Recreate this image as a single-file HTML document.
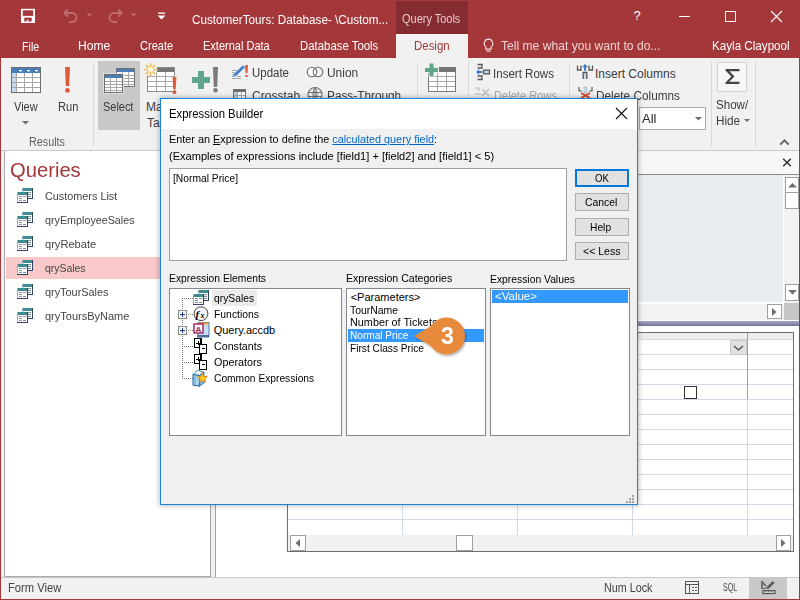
<!DOCTYPE html>
<html><head><meta charset="utf-8">
<style>
*{margin:0;padding:0;box-sizing:border-box}
html,body{width:800px;height:600px;overflow:hidden;background:#fff}
body{font-family:"Liberation Sans",sans-serif;position:relative}
.a{position:absolute;display:block}
.t{position:absolute;white-space:nowrap}
</style></head><body>
<div class="a" style="left:0px;top:0px;width:800px;height:58px;background:#A4373A;"></div>
<div class="a" style="left:396px;top:1px;width:72px;height:33px;background:#842C30;"></div>
<div class="a" style="left:396px;top:34px;width:72px;height:24px;background:#F1F1F1;"></div>
<svg class="a" style="left:20px;top:7px;" width="17" height="17" viewBox="0 0 17 17"><rect x="1" y="1.8" width="14" height="14.2" fill="#fff"/><rect x="2.8" y="3.3" width="10.4" height="5.6" fill="#A4373A"/><rect x="4.3" y="10.6" width="7.4" height="3.9" fill="#A4373A"/><rect x="6.6" y="12.8" width="1.8" height="1.8" fill="#fff"/></svg>
<svg class="a" style="left:62px;top:8px;" width="18" height="15" viewBox="0 0 18 15"><path d="M2 5 L6 1.5 M2 5 L6 8.5 M2 5 H10 A4.5 4.5 0 0 1 10 14 H7" fill="none" stroke="#C06B6D" stroke-width="1.8"/></svg>
<svg class="a" style="left:86px;top:13px;" width="8" height="4" viewBox="0 0 8 4"><path d="M0.5 0.5h6l-3 3z" fill="#C06B6D"/></svg>
<svg class="a" style="left:106px;top:8px;" width="18" height="15" viewBox="0 0 18 15"><path d="M16 5 L12 1.5 M16 5 L12 8.5 M16 5 H8 A4.5 4.5 0 0 0 8 14 H11" fill="none" stroke="#C06B6D" stroke-width="1.8"/></svg>
<svg class="a" style="left:130px;top:13px;" width="8" height="4" viewBox="0 0 8 4"><path d="M0.5 0.5h6l-3 3z" fill="#C06B6D"/></svg>
<svg class="a" style="left:157px;top:12px;" width="9" height="8" viewBox="0 0 9 8"><rect x="1" y="0.5" width="7" height="1.3" fill="#fff"/><path d="M0.5 3.5h8l-4 4z" fill="#fff"/></svg>
<div class="t" style="left:192.00px;top:14px;font-size:12px;line-height:12px;color:#fff;font-weight:normal;font-family:'Liberation Sans',sans-serif;transform:scaleX(0.9748);transform-origin:0 0;">CustomerTours: Database- \Custom...</div>
<div class="t" style="left:402.00px;top:13px;font-size:12px;line-height:12px;color:#E9C9CA;font-weight:normal;font-family:'Liberation Sans',sans-serif;transform:scaleX(0.9137);transform-origin:0 0;">Query Tools</div>
<svg class="a" style="left:632px;top:9px;" width="10" height="13" viewBox="0 0 10 13"><text x="5" y="11" font-family="Liberation Sans" font-size="13" fill="#fff" text-anchor="middle">?</text></svg>
<div class="a" style="left:679px;top:16px;width:11px;height:1px;background:#fff;"></div>
<svg class="a" style="left:724px;top:10px;" width="12" height="12" viewBox="0 0 12 12"><rect x="1.5" y="1.5" width="10" height="10" fill="none" stroke="#fff" stroke-width="1"/></svg>
<svg class="a" style="left:770px;top:10px;" width="13" height="13" viewBox="0 0 13 13"><path d="M1 1L12 12M12 1L1 12" stroke="#fff" stroke-width="1.1"/></svg>
<div class="t" style="left:21.50px;top:41px;font-size:12px;line-height:12px;color:#fff;font-weight:normal;font-family:'Liberation Sans',sans-serif;transform:scaleX(0.8900);transform-origin:0 0;">File</div>
<div class="t" style="left:77.50px;top:40px;font-size:12px;line-height:12px;color:#fff;font-weight:normal;font-family:'Liberation Sans',sans-serif;transform:scaleX(1.0051);transform-origin:0 0;">Home</div>
<div class="t" style="left:139.50px;top:40px;font-size:12px;line-height:12px;color:#fff;font-weight:normal;font-family:'Liberation Sans',sans-serif;transform:scaleX(0.9218);transform-origin:0 0;">Create</div>
<div class="t" style="left:202.50px;top:40px;font-size:12px;line-height:12px;color:#fff;font-weight:normal;font-family:'Liberation Sans',sans-serif;transform:scaleX(0.9174);transform-origin:0 0;">External Data</div>
<div class="t" style="left:299.50px;top:40px;font-size:12px;line-height:12px;color:#fff;font-weight:normal;font-family:'Liberation Sans',sans-serif;transform:scaleX(0.9490);transform-origin:0 0;">Database Tools</div>
<div class="t" style="left:413.50px;top:40px;font-size:12px;line-height:12px;color:#A4373A;font-weight:normal;font-family:'Liberation Sans',sans-serif;transform:scaleX(0.9542);transform-origin:0 0;">Design</div>
<svg class="a" style="left:482px;top:38px;" width="13" height="15" viewBox="0 0 13 15"><path d="M6.5 1.2a4.3 4.3 0 0 0-2.6 7.7v2.2h5.2V8.9a4.3 4.3 0 0 0-2.6-7.7z" fill="none" stroke="#F2D7D7" stroke-width="1.2"/><path d="M4.3 13.2h4.4" stroke="#F2D7D7" stroke-width="1.2"/></svg>
<div class="t" style="left:501.00px;top:40px;font-size:12.5px;line-height:12.5px;color:#F0D4D4;font-weight:normal;font-family:'Liberation Sans',sans-serif;transform:scaleX(0.9684);transform-origin:0 0;">Tell me what you want to do...</div>
<div class="t" style="left:711.50px;top:40px;font-size:12px;line-height:12px;color:#fff;font-weight:normal;font-family:'Liberation Sans',sans-serif;transform:scaleX(0.9700);transform-origin:0 0;">Kayla Claypool</div>
<div class="a" style="left:1px;top:58px;width:798px;height:92px;background:#F1F1F1;"></div>
<div class="a" style="left:1px;top:150px;width:798px;height:1px;background:#C9C9C9;"></div>
<div class="a" style="left:93px;top:62px;width:1px;height:84px;background:#DADADA;"></div>
<div class="a" style="left:417px;top:62px;width:1px;height:84px;background:#DADADA;"></div>
<div class="a" style="left:468px;top:62px;width:1px;height:84px;background:#DADADA;"></div>
<div class="a" style="left:569px;top:62px;width:1px;height:84px;background:#DADADA;"></div>
<div class="a" style="left:711px;top:62px;width:1px;height:84px;background:#DADADA;"></div>
<div class="a" style="left:755px;top:62px;width:1px;height:84px;background:#DADADA;"></div>
<svg class="a" style="left:11px;top:67px;shape-rendering:crispEdges" width="30" height="26" viewBox="0 0 30 26"><rect x="0" y="0" width="30" height="26" fill="#6E6E6E"/><rect x="1" y="6" width="28" height="19" fill="#A8A8A8"/><rect x="1" y="1" width="28" height="5" fill="#4A7EBB"/><rect x="1" y="6" width="4" height="4" fill="#C5D9EF"/><rect x="6" y="6" width="7" height="4" fill="#fff"/><rect x="14" y="6" width="7" height="4" fill="#fff"/><rect x="22" y="6" width="7" height="4" fill="#fff"/><rect x="1" y="11" width="4" height="4" fill="#C5D9EF"/><rect x="6" y="11" width="7" height="4" fill="#fff"/><rect x="14" y="11" width="7" height="4" fill="#fff"/><rect x="22" y="11" width="7" height="4" fill="#fff"/><rect x="1" y="16" width="4" height="4" fill="#C5D9EF"/><rect x="6" y="16" width="7" height="4" fill="#fff"/><rect x="14" y="16" width="7" height="4" fill="#fff"/><rect x="22" y="16" width="7" height="4" fill="#fff"/><rect x="1" y="21" width="4" height="4" fill="#C5D9EF"/><rect x="6" y="21" width="7" height="4" fill="#fff"/><rect x="14" y="21" width="7" height="4" fill="#fff"/><rect x="22" y="21" width="7" height="4" fill="#fff"/><path d="M8 2.5h4l-2 2.2z M16 2.5h4l-2 2.2z M24 2.5h4l-2 2.2z" fill="#fff" transform="translate(-0.5,0)"/></svg>
<div class="t" style="left:13.50px;top:101px;font-size:12px;line-height:12px;color:#3B3B3B;font-weight:normal;font-family:'Liberation Sans',sans-serif;transform:scaleX(0.9186);transform-origin:0 0;">View</div>
<svg class="a" style="left:22px;top:121px;" width="7" height="4" viewBox="0 0 7 4"><path d="M0 0h7l-3.5 3.5z" fill="#6E6E6E"/></svg>
<svg class="a" style="left:64px;top:66px;" width="7" height="28" viewBox="0 0 7 28"><path d="M1 1h5l-0.8 19h-3.4z" fill="#DE5B3C"/><circle cx="3.5" cy="24.4" r="2.4" fill="#DE5B3C"/></svg>
<div class="t" style="left:57.70px;top:101px;font-size:12px;line-height:12px;color:#3B3B3B;font-weight:normal;font-family:'Liberation Sans',sans-serif;transform:scaleX(0.9278);transform-origin:0 0;">Run</div>
<div class="t" style="left:28.50px;top:136px;font-size:12px;line-height:12px;color:#5E5E5E;font-weight:normal;font-family:'Liberation Sans',sans-serif;transform:scaleX(0.8972);transform-origin:0 0;">Results</div>
<div class="a" style="left:98px;top:61px;width:42px;height:69px;background:#C8C8C8;"></div>
<svg class="a" style="left:116px;top:68px;shape-rendering:crispEdges" width="19" height="19" viewBox="0 0 19 19"><rect x="0" y="0" width="19" height="19" fill="#6E6E6E"/><rect x="1" y="4" width="17" height="14" fill="#A8A8A8"/><rect x="1" y="1" width="17" height="3" fill="#4A7EBB"/><rect x="1" y="4" width="5" height="3" fill="#fff"/><rect x="7" y="4" width="5" height="3" fill="#fff"/><rect x="13" y="4" width="5" height="3" fill="#fff"/><rect x="1" y="8" width="5" height="2" fill="#fff"/><rect x="7" y="8" width="5" height="2" fill="#fff"/><rect x="13" y="8" width="5" height="2" fill="#fff"/><rect x="1" y="11" width="5" height="2" fill="#fff"/><rect x="7" y="11" width="5" height="2" fill="#fff"/><rect x="13" y="11" width="5" height="2" fill="#fff"/><rect x="1" y="14" width="5" height="2" fill="#fff"/><rect x="7" y="14" width="5" height="2" fill="#fff"/><rect x="13" y="14" width="5" height="2" fill="#fff"/><rect x="1" y="17" width="5" height="1" fill="#fff"/><rect x="7" y="17" width="5" height="1" fill="#fff"/><rect x="13" y="17" width="5" height="1" fill="#fff"/></svg>
<svg class="a" style="left:103px;top:73px;shape-rendering:crispEdges" width="21" height="21" viewBox="0 0 21 21"><rect x="0" y="0" width="21" height="21" fill="#E0E0E0"/><g transform="translate(1,1)"><rect x="0" y="0" width="19" height="19" fill="#6E6E6E"/><rect x="1" y="4" width="17" height="14" fill="#A8A8A8"/><rect x="1" y="1" width="17" height="3" fill="#4A7EBB"/><rect x="1" y="4" width="5" height="3" fill="#fff"/><rect x="7" y="4" width="5" height="3" fill="#fff"/><rect x="13" y="4" width="5" height="3" fill="#fff"/><rect x="1" y="8" width="5" height="2" fill="#fff"/><rect x="7" y="8" width="5" height="2" fill="#fff"/><rect x="13" y="8" width="5" height="2" fill="#fff"/><rect x="1" y="11" width="5" height="2" fill="#fff"/><rect x="7" y="11" width="5" height="2" fill="#fff"/><rect x="13" y="11" width="5" height="2" fill="#fff"/><rect x="1" y="14" width="5" height="2" fill="#fff"/><rect x="7" y="14" width="5" height="2" fill="#fff"/><rect x="13" y="14" width="5" height="2" fill="#fff"/><rect x="1" y="17" width="5" height="1" fill="#fff"/><rect x="7" y="17" width="5" height="1" fill="#fff"/><rect x="13" y="17" width="5" height="1" fill="#fff"/></g></svg>
<div class="t" style="left:103.00px;top:101px;font-size:12px;line-height:12px;color:#3B3B3B;font-weight:normal;font-family:'Liberation Sans',sans-serif;transform:scaleX(0.9113);transform-origin:0 0;">Select</div>
<svg class="a" style="left:147px;top:67px;shape-rendering:crispEdges" width="28" height="25" viewBox="0 0 28 25"><rect x="0" y="0" width="28" height="25" fill="#8A8A8A"/><rect x="1" y="5" width="26" height="19" fill="#A8A8A8"/><rect x="1" y="1" width="26" height="4" fill="#767676"/><rect x="1" y="5" width="8" height="4" fill="#fff"/><rect x="10" y="5" width="8" height="4" fill="#fff"/><rect x="19" y="5" width="8" height="4" fill="#fff"/><rect x="1" y="10" width="8" height="4" fill="#fff"/><rect x="10" y="10" width="8" height="4" fill="#fff"/><rect x="19" y="10" width="8" height="4" fill="#fff"/><rect x="1" y="15" width="8" height="4" fill="#fff"/><rect x="10" y="15" width="8" height="4" fill="#fff"/><rect x="19" y="15" width="8" height="4" fill="#fff"/><rect x="1" y="20" width="8" height="4" fill="#fff"/><rect x="10" y="20" width="8" height="4" fill="#fff"/><rect x="19" y="20" width="8" height="4" fill="#fff"/></svg>
<svg class="a" style="left:143px;top:62px;" width="15" height="15" viewBox="0 0 15 15"><circle cx="7.5" cy="7.5" r="6.8" fill="#F1F1F1"/><g stroke="#F0C060" stroke-width="1.7" stroke-linecap="round"><path d="M7.5 1.5v12M1.5 7.5h12M3.3 3.3l8.4 8.4M11.7 3.3l-8.4 8.4"/></g><circle cx="7.5" cy="7.5" r="2.6" fill="#FFF6DC"/></svg>
<svg class="a" style="left:171px;top:76px;" width="7" height="20" viewBox="0 0 7 20"><path d="M1.6 1h3.8l-0.6 12h-2.6z" fill="#DE5B3C"/><circle cx="3.5" cy="16.2" r="1.9" fill="#DE5B3C"/></svg>
<div class="t" style="left:146.00px;top:101px;font-size:12px;line-height:12px;color:#3B3B3B;font-weight:normal;font-family:'Liberation Sans',sans-serif;">Ma</div>
<div class="t" style="left:147.00px;top:117px;font-size:12px;line-height:12px;color:#3B3B3B;font-weight:normal;font-family:'Liberation Sans',sans-serif;">Ta</div>
<svg class="a" style="left:192px;top:71px;" width="18" height="18" viewBox="0 0 18 18"><path d="M6 0h6v6h6v6h-6v6h-6v-6h-6v-6h6z" fill="#5FA58A"/></svg>
<svg class="a" style="left:212px;top:66px;" width="7" height="28" viewBox="0 0 7 28"><path d="M1 1h5l-0.8 20h-3.4z" fill="#7A7A7A"/><circle cx="3.5" cy="24.3" r="2.3" fill="#7A7A7A"/></svg>
<svg class="a" style="left:230px;top:64px;" width="20" height="16" viewBox="0 0 20 16"><g stroke="#A8A8A8" stroke-width="1"><path d="M2 6.5h5M2 8.5h3M2 10.5h2M2 12.5h1.5M7 12.5h4M2 14.5h9"/></g><path d="M5.6 10.4L12.6 3.4" stroke="#3F7CC0" stroke-width="2.8"/><path d="M3 13l1.4-3.8 2.4 2.4z" fill="#3F7CC0"/><path d="M11.6 2.4l1.2-1.2 2.4 2.4-1.2 1.2z" fill="#3F7CC0"/><path d="M15.1 1h2.9l-0.5 8.3h-1.9z" fill="#DE5B3C"/><rect x="15.3" y="11" width="2.4" height="2" fill="#DE5B3C"/></svg>
<div class="t" style="left:251.50px;top:67px;font-size:12px;line-height:12px;color:#3B3B3B;font-weight:normal;font-family:'Liberation Sans',sans-serif;transform:scaleX(0.9546);transform-origin:0 0;">Update</div>
<svg class="a" style="left:306px;top:66px;" width="18" height="12" viewBox="0 0 18 12"><circle cx="6" cy="6" r="4.8" fill="#fff" stroke="#6E6E6E" stroke-width="1.1"/><circle cx="12" cy="6" r="4.8" fill="none" stroke="#6E6E6E" stroke-width="1.1"/></svg>
<div class="t" style="left:326.50px;top:67px;font-size:12px;line-height:12px;color:#3B3B3B;font-weight:normal;font-family:'Liberation Sans',sans-serif;transform:scaleX(0.9941);transform-origin:0 0;">Union</div>
<svg class="a" style="left:233px;top:89px;shape-rendering:crispEdges" width="13" height="9" viewBox="0 0 13 9"><rect x="0" y="0" width="13" height="12" fill="#6E6E6E"/><rect x="1" y="3" width="11" height="8" fill="#A8A8A8"/><rect x="1" y="1" width="11" height="2" fill="#6E6E6E"/><rect x="1" y="3" width="3" height="3" fill="#BCD0E8"/><rect x="5" y="3" width="3" height="3" fill="#fff"/><rect x="9" y="3" width="3" height="3" fill="#fff"/><rect x="1" y="7" width="3" height="2" fill="#BCD0E8"/><rect x="5" y="7" width="3" height="2" fill="#fff"/><rect x="9" y="7" width="3" height="2" fill="#fff"/><rect x="1" y="10" width="3" height="1" fill="#BCD0E8"/><rect x="5" y="10" width="3" height="1" fill="#fff"/><rect x="9" y="10" width="3" height="1" fill="#fff"/></svg>
<div class="t" style="left:251.50px;top:90px;font-size:12px;line-height:12px;color:#3B3B3B;font-weight:normal;font-family:'Liberation Sans',sans-serif;transform:scaleX(1.0032);transform-origin:0 0;">Crosstab</div>
<svg class="a" style="left:307px;top:86px;" width="16" height="12" viewBox="0 0 16 12"><circle cx="8" cy="8.5" r="7" fill="none" stroke="#6E6E6E" stroke-width="1.1"/><path d="M1.5 6.5h13M1.5 10.5h13M8 1.5v14M8 1.5c-2.6 3-2.6 11 0 14M8 1.5c2.6 3 2.6 11 0 14" fill="none" stroke="#6E6E6E" stroke-width="1"/></svg>
<div class="t" style="left:326.50px;top:90px;font-size:12px;line-height:12px;color:#3B3B3B;font-weight:normal;font-family:'Liberation Sans',sans-serif;transform:scaleX(0.9840);transform-origin:0 0;">Pass-Through</div>
<svg class="a" style="left:428px;top:67px;shape-rendering:crispEdges" width="28" height="25" viewBox="0 0 28 25"><rect x="0" y="0" width="28" height="25" fill="#767676"/><rect x="1" y="5" width="26" height="19" fill="#A8A8A8"/><rect x="1" y="1" width="26" height="4" fill="#767676"/><rect x="1" y="5" width="8" height="4" fill="#fff"/><rect x="10" y="5" width="8" height="4" fill="#fff"/><rect x="19" y="5" width="8" height="4" fill="#fff"/><rect x="1" y="10" width="8" height="4" fill="#fff"/><rect x="10" y="10" width="8" height="4" fill="#fff"/><rect x="19" y="10" width="8" height="4" fill="#fff"/><rect x="1" y="15" width="8" height="4" fill="#fff"/><rect x="10" y="15" width="8" height="4" fill="#fff"/><rect x="19" y="15" width="8" height="4" fill="#fff"/><rect x="1" y="20" width="8" height="4" fill="#fff"/><rect x="10" y="20" width="8" height="4" fill="#fff"/><rect x="19" y="20" width="8" height="4" fill="#fff"/></svg>
<svg class="a" style="left:425px;top:63px;" width="14" height="14" viewBox="0 0 14 14"><rect x="0" y="0" width="14" height="14" fill="none"/><path d="M4 0h5v4.5h4.5v5h-4.5v4.5h-5v-4.5h-4.5v-5h4.5z" fill="#5FA58A" stroke="#F1F1F1" stroke-width="1"/></svg>
<svg class="a" style="left:475px;top:63px;" width="16" height="18" viewBox="0 0 16 18"><g fill="none" stroke="#555" stroke-width="1.3"><path d="M2.5 1.5h4.5v3.5h-4.5M2.5 13h4.5v3.5h-4.5"/><rect x="8.5" y="7.2" width="6" height="3.6" fill="#C5DCF2"/></g><path d="M1 9l3.2-3v2h3v2h-3v2z" fill="#3F7CC0"/></svg>
<div class="t" style="left:493.04px;top:68px;font-size:12px;line-height:12px;color:#3B3B3B;font-weight:normal;font-family:'Liberation Sans',sans-serif;transform:scaleX(0.9623);transform-origin:0 0;">Insert Rows</div>
<svg class="a" style="left:474px;top:86px;" width="17" height="12" viewBox="0 0 17 12"><g stroke="#B8B8B8" stroke-width="1.2" fill="none"><path d="M1 2h4v3M1 8h6M8 3l7 7M15 3l-7 7"/></g></svg>
<div class="t" style="left:494.00px;top:90px;font-size:12px;line-height:12px;color:#A8A8A8;font-weight:normal;font-family:'Liberation Sans',sans-serif;transform:scaleX(0.9261);transform-origin:0 0;">Delete Rows</div>
<svg class="a" style="left:576px;top:63px;" width="18" height="17" viewBox="0 0 18 17"><g fill="none" stroke="#555" stroke-width="1.3"><path d="M1.5 2.5v4.5h3.5v-4.5M13 2.5v4.5h3.5v-4.5"/><path d="M7.2 16v-6.5h3.6v6.5" fill="#C5DCF2"/></g><path d="M9 1l3 3.2h-2v3.5h-2v-3.5h-2z" fill="#3F7CC0"/></svg>
<div class="t" style="left:595.00px;top:68px;font-size:12px;line-height:12px;color:#3B3B3B;font-weight:normal;font-family:'Liberation Sans',sans-serif;">Insert Columns</div>
<svg class="a" style="left:578px;top:86px;" width="15" height="12" viewBox="0 0 15 12"><g fill="none" stroke="#555" stroke-width="1.2"><path d="M1 1v4h3M14 1v4h-3"/></g><rect x="6" y="1" width="3" height="6" fill="#C5DCF2" stroke="#A8A8A8" stroke-width="0.6"/><path d="M3 7l9 5M12 7l-9 5" stroke="#D9462F" stroke-width="2"/></svg>
<div class="t" style="left:596.00px;top:90px;font-size:12px;line-height:12px;color:#3B3B3B;font-weight:normal;font-family:'Liberation Sans',sans-serif;transform:scaleX(0.9839);transform-origin:0 0;">Delete Columns</div>
<div class="a" style="left:639px;top:107px;width:67px;height:23px;background:#fff;border:1px solid #ABABAB"></div>
<div class="t" style="left:642.20px;top:113px;font-size:12px;line-height:12px;color:#262626;font-weight:normal;font-family:'Liberation Sans',sans-serif;transform:scaleX(1.0892);transform-origin:0 0;">All</div>
<svg class="a" style="left:695px;top:117px;" width="7" height="4" viewBox="0 0 7 4"><path d="M0 0h7l-3.5 3.5z" fill="#6E6E6E"/></svg>
<div class="a" style="left:717px;top:62px;width:30px;height:30px;background:#F7F7F7;border:1px solid #D2D2D2"></div>
<svg class="a" style="left:724px;top:68px;" width="17" height="17" viewBox="0 0 17 17"><path d="M15.5 3.2V1H1.5v1.6l5.8 5.9-5.9 6.2V16h14.1v-2.3H5.2l5.3-5.3-5-5.2z" fill="#444"/></svg>
<div class="t" style="left:716.20px;top:99px;font-size:12px;line-height:12px;color:#3B3B3B;font-weight:normal;font-family:'Liberation Sans',sans-serif;transform:scaleX(0.9642);transform-origin:0 0;">Show/</div>
<div class="t" style="left:716.20px;top:115px;font-size:12px;line-height:12px;color:#3B3B3B;font-weight:normal;font-family:'Liberation Sans',sans-serif;transform:scaleX(0.9758);transform-origin:0 0;">Hide</div>
<svg class="a" style="left:744px;top:119px;" width="6" height="3" viewBox="0 0 6 3"><path d="M0 0h6l-3 3z" fill="#6E6E6E"/></svg>
<svg class="a" style="left:779px;top:137px;" width="11" height="9" viewBox="0 0 11 9"><path d="M1.2 7.6l4.3-4.3 4.3 4.3" fill="none" stroke="#666" stroke-width="2"/></svg>
<div class="a" style="left:1px;top:151px;width:215px;height:426px;background:#F1F1F1;"></div>
<div class="a" style="left:4px;top:151px;width:207px;height:426px;background:#fff;border:1px solid #ABABAB;border-top:none"></div>
<div class="a" style="left:210px;top:151px;width:6px;height:426px;background:#F1F1F1;border-left:1px solid #A0A0A0;border-right:1px solid #A0A0A0"></div>
<div class="t" style="left:10.00px;top:160px;font-size:20px;line-height:20px;color:#A4373A;font-weight:normal;font-family:'Liberation Sans',sans-serif;transform:scaleX(1.0096);transform-origin:0 0;">Queries</div>
<div class="a" style="left:6px;top:257px;width:204px;height:22px;background:#F9C8C8;"></div>
<svg class="a" style="left:17px;top:188px;shape-rendering:crispEdges" width="17" height="15" viewBox="0 0 17 15"><rect x="5" y="0" width="11" height="11" fill="#fff"/><rect x="5" y="0" width="11" height="3" fill="#3F8C8E"/><rect x="5" y="0" width="1" height="11" fill="#9AAFC0"/><rect x="15" y="0" width="1" height="11" fill="#2E4560"/><rect x="5" y="10" width="11" height="1" fill="#2E4560"/><rect x="11" y="4" width="3" height="1" fill="#7F93AE"/><rect x="11" y="6" width="3" height="1" fill="#7F93AE"/><rect x="11" y="8" width="3" height="1" fill="#7F93AE"/><rect x="0" y="4" width="11" height="11" fill="#fff"/><rect x="0" y="4" width="11" height="3" fill="#3F8C8E"/><rect x="0" y="4" width="1" height="11" fill="#9AAFC0"/><rect x="10" y="4" width="1" height="11" fill="#2E4560"/><rect x="0" y="14" width="11" height="1" fill="#2E4560"/><rect x="2" y="8" width="3" height="1" fill="#7F93AE"/><rect x="6" y="8" width="3" height="1" fill="#7F93AE"/><rect x="2" y="10" width="3" height="1" fill="#7F93AE"/><rect x="2" y="12" width="3" height="1" fill="#7F93AE"/><rect x="6" y="12" width="3" height="1" fill="#7F93AE"/></svg>
<div class="t" style="left:44.70px;top:191px;font-size:11.5px;line-height:11.5px;color:#444444;font-weight:normal;font-family:'Liberation Sans',sans-serif;transform:scaleX(0.9420);transform-origin:0 0;">Customers List</div>
<svg class="a" style="left:17px;top:212px;shape-rendering:crispEdges" width="17" height="15" viewBox="0 0 17 15"><rect x="5" y="0" width="11" height="11" fill="#fff"/><rect x="5" y="0" width="11" height="3" fill="#3F8C8E"/><rect x="5" y="0" width="1" height="11" fill="#9AAFC0"/><rect x="15" y="0" width="1" height="11" fill="#2E4560"/><rect x="5" y="10" width="11" height="1" fill="#2E4560"/><rect x="11" y="4" width="3" height="1" fill="#7F93AE"/><rect x="11" y="6" width="3" height="1" fill="#7F93AE"/><rect x="11" y="8" width="3" height="1" fill="#7F93AE"/><rect x="0" y="4" width="11" height="11" fill="#fff"/><rect x="0" y="4" width="11" height="3" fill="#3F8C8E"/><rect x="0" y="4" width="1" height="11" fill="#9AAFC0"/><rect x="10" y="4" width="1" height="11" fill="#2E4560"/><rect x="0" y="14" width="11" height="1" fill="#2E4560"/><rect x="2" y="8" width="3" height="1" fill="#7F93AE"/><rect x="6" y="8" width="3" height="1" fill="#7F93AE"/><rect x="2" y="10" width="3" height="1" fill="#7F93AE"/><rect x="2" y="12" width="3" height="1" fill="#7F93AE"/><rect x="6" y="12" width="3" height="1" fill="#7F93AE"/></svg>
<div class="t" style="left:44.70px;top:215px;font-size:11.5px;line-height:11.5px;color:#444444;font-weight:normal;font-family:'Liberation Sans',sans-serif;transform:scaleX(0.9342);transform-origin:0 0;">qryEmployeeSales</div>
<svg class="a" style="left:17px;top:236px;shape-rendering:crispEdges" width="17" height="15" viewBox="0 0 17 15"><rect x="5" y="0" width="11" height="11" fill="#fff"/><rect x="5" y="0" width="11" height="3" fill="#3F8C8E"/><rect x="5" y="0" width="1" height="11" fill="#9AAFC0"/><rect x="15" y="0" width="1" height="11" fill="#2E4560"/><rect x="5" y="10" width="11" height="1" fill="#2E4560"/><rect x="11" y="4" width="3" height="1" fill="#7F93AE"/><rect x="11" y="6" width="3" height="1" fill="#7F93AE"/><rect x="11" y="8" width="3" height="1" fill="#7F93AE"/><rect x="0" y="4" width="11" height="11" fill="#fff"/><rect x="0" y="4" width="11" height="3" fill="#3F8C8E"/><rect x="0" y="4" width="1" height="11" fill="#9AAFC0"/><rect x="10" y="4" width="1" height="11" fill="#2E4560"/><rect x="0" y="14" width="11" height="1" fill="#2E4560"/><rect x="2" y="8" width="3" height="1" fill="#7F93AE"/><rect x="6" y="8" width="3" height="1" fill="#7F93AE"/><rect x="2" y="10" width="3" height="1" fill="#7F93AE"/><rect x="2" y="12" width="3" height="1" fill="#7F93AE"/><rect x="6" y="12" width="3" height="1" fill="#7F93AE"/></svg>
<div class="t" style="left:44.70px;top:239px;font-size:11.5px;line-height:11.5px;color:#444444;font-weight:normal;font-family:'Liberation Sans',sans-serif;transform:scaleX(0.9646);transform-origin:0 0;">qryRebate</div>
<svg class="a" style="left:17px;top:260px;shape-rendering:crispEdges" width="17" height="15" viewBox="0 0 17 15"><rect x="5" y="0" width="11" height="11" fill="#fff"/><rect x="5" y="0" width="11" height="3" fill="#3F8C8E"/><rect x="5" y="0" width="1" height="11" fill="#9AAFC0"/><rect x="15" y="0" width="1" height="11" fill="#2E4560"/><rect x="5" y="10" width="11" height="1" fill="#2E4560"/><rect x="11" y="4" width="3" height="1" fill="#7F93AE"/><rect x="11" y="6" width="3" height="1" fill="#7F93AE"/><rect x="11" y="8" width="3" height="1" fill="#7F93AE"/><rect x="0" y="4" width="11" height="11" fill="#fff"/><rect x="0" y="4" width="11" height="3" fill="#3F8C8E"/><rect x="0" y="4" width="1" height="11" fill="#9AAFC0"/><rect x="10" y="4" width="1" height="11" fill="#2E4560"/><rect x="0" y="14" width="11" height="1" fill="#2E4560"/><rect x="2" y="8" width="3" height="1" fill="#7F93AE"/><rect x="6" y="8" width="3" height="1" fill="#7F93AE"/><rect x="2" y="10" width="3" height="1" fill="#7F93AE"/><rect x="2" y="12" width="3" height="1" fill="#7F93AE"/><rect x="6" y="12" width="3" height="1" fill="#7F93AE"/></svg>
<div class="t" style="left:44.70px;top:263px;font-size:11.5px;line-height:11.5px;color:#444444;font-weight:normal;font-family:'Liberation Sans',sans-serif;transform:scaleX(0.9068);transform-origin:0 0;">qrySales</div>
<svg class="a" style="left:17px;top:284px;shape-rendering:crispEdges" width="17" height="15" viewBox="0 0 17 15"><rect x="5" y="0" width="11" height="11" fill="#fff"/><rect x="5" y="0" width="11" height="3" fill="#3F8C8E"/><rect x="5" y="0" width="1" height="11" fill="#9AAFC0"/><rect x="15" y="0" width="1" height="11" fill="#2E4560"/><rect x="5" y="10" width="11" height="1" fill="#2E4560"/><rect x="11" y="4" width="3" height="1" fill="#7F93AE"/><rect x="11" y="6" width="3" height="1" fill="#7F93AE"/><rect x="11" y="8" width="3" height="1" fill="#7F93AE"/><rect x="0" y="4" width="11" height="11" fill="#fff"/><rect x="0" y="4" width="11" height="3" fill="#3F8C8E"/><rect x="0" y="4" width="1" height="11" fill="#9AAFC0"/><rect x="10" y="4" width="1" height="11" fill="#2E4560"/><rect x="0" y="14" width="11" height="1" fill="#2E4560"/><rect x="2" y="8" width="3" height="1" fill="#7F93AE"/><rect x="6" y="8" width="3" height="1" fill="#7F93AE"/><rect x="2" y="10" width="3" height="1" fill="#7F93AE"/><rect x="2" y="12" width="3" height="1" fill="#7F93AE"/><rect x="6" y="12" width="3" height="1" fill="#7F93AE"/></svg>
<div class="t" style="left:44.70px;top:287px;font-size:11.5px;line-height:11.5px;color:#444444;font-weight:normal;font-family:'Liberation Sans',sans-serif;transform:scaleX(0.9456);transform-origin:0 0;">qryTourSales</div>
<svg class="a" style="left:17px;top:308px;shape-rendering:crispEdges" width="17" height="15" viewBox="0 0 17 15"><rect x="5" y="0" width="11" height="11" fill="#fff"/><rect x="5" y="0" width="11" height="3" fill="#3F8C8E"/><rect x="5" y="0" width="1" height="11" fill="#9AAFC0"/><rect x="15" y="0" width="1" height="11" fill="#2E4560"/><rect x="5" y="10" width="11" height="1" fill="#2E4560"/><rect x="11" y="4" width="3" height="1" fill="#7F93AE"/><rect x="11" y="6" width="3" height="1" fill="#7F93AE"/><rect x="11" y="8" width="3" height="1" fill="#7F93AE"/><rect x="0" y="4" width="11" height="11" fill="#fff"/><rect x="0" y="4" width="11" height="3" fill="#3F8C8E"/><rect x="0" y="4" width="1" height="11" fill="#9AAFC0"/><rect x="10" y="4" width="1" height="11" fill="#2E4560"/><rect x="0" y="14" width="11" height="1" fill="#2E4560"/><rect x="2" y="8" width="3" height="1" fill="#7F93AE"/><rect x="6" y="8" width="3" height="1" fill="#7F93AE"/><rect x="2" y="10" width="3" height="1" fill="#7F93AE"/><rect x="2" y="12" width="3" height="1" fill="#7F93AE"/><rect x="6" y="12" width="3" height="1" fill="#7F93AE"/></svg>
<div class="t" style="left:44.70px;top:311px;font-size:11.5px;line-height:11.5px;color:#444444;font-weight:normal;font-family:'Liberation Sans',sans-serif;transform:scaleX(0.9568);transform-origin:0 0;">qryToursByName</div>
<div class="a" style="left:216px;top:151px;width:583px;height:24px;background:#F7F7F7;"></div>
<div class="a" style="left:216px;top:174px;width:583px;height:1px;background:#8C8C8C;"></div>
<svg class="a" style="left:782px;top:158px;" width="10" height="9" viewBox="0 0 10 9"><path d="M1.2 0.8L8.8 8.2M8.8 0.8L1.2 8.2" stroke="#333" stroke-width="1.5"/></svg>
<div class="a" style="left:216px;top:175px;width:567px;height:127px;background:#E9EDF0;"></div>
<div class="a" style="left:783px;top:175px;width:1px;height:128px;background:#fff;"></div>
<div class="a" style="left:784px;top:175px;width:15px;height:128px;background:#F2F2F2;"></div>
<div class="a" style="left:785px;top:177px;width:14px;height:16px;background:#fff;border:1px solid #A0A0A0"></div>
<svg class="a" style="left:788px;top:183px;" width="9" height="5" viewBox="0 0 9 5"><path d="M0 4.5h9l-4.5-4.5z" fill="#6E6E6E"/></svg>
<div class="a" style="left:785px;top:192px;width:14px;height:17px;background:#fff;border:1px solid #A0A0A0"></div>
<div class="a" style="left:785px;top:284px;width:14px;height:17px;background:#fff;border:1px solid #A0A0A0"></div>
<svg class="a" style="left:788px;top:290px;" width="9" height="5" viewBox="0 0 9 5"><path d="M0 0h9l-4.5 4.5z" fill="#6E6E6E"/></svg>
<div class="a" style="left:216px;top:302px;width:568px;height:18px;background:#F2F2F2;"></div>
<div class="a" style="left:216px;top:302px;width:568px;height:2px;background:#fff;"></div>
<div class="a" style="left:767px;top:304px;width:15px;height:15px;background:#fff;border:1px solid #A0A0A0"></div>
<svg class="a" style="left:772px;top:308px;" width="5" height="8" viewBox="0 0 5 8"><path d="M0 0v8l4.5-4z" fill="#6E6E6E"/></svg>
<div class="a" style="left:784px;top:303px;width:15px;height:17px;background:#C6C6C6;"></div>
<div class="a" style="left:216px;top:320px;width:583px;height:7px;background:#fff;"></div>
<div class="a" style="left:216px;top:321px;width:583px;height:5px;background:linear-gradient(#A8A8C4,#727296);"></div>
<div class="a" style="left:216px;top:326px;width:583px;height:251px;background:#fff;"></div>
<div class="a" style="left:287px;top:332px;width:507px;height:220px;background:#fff;border:1px solid #6E6E6E"></div>
<div class="a" style="left:288px;top:333px;width:505px;height:6px;background:#EDEDED;"></div>
<div class="a" style="left:288px;top:339px;width:505px;height:1px;background:#D2D9E8;"></div>
<div class="a" style="left:288px;top:354px;width:505px;height:1px;background:#D2D9E8;"></div>
<div class="a" style="left:288px;top:369px;width:505px;height:1px;background:#D2D9E8;"></div>
<div class="a" style="left:288px;top:384px;width:505px;height:1px;background:#D2D9E8;"></div>
<div class="a" style="left:288px;top:399px;width:505px;height:1px;background:#D2D9E8;"></div>
<div class="a" style="left:288px;top:414px;width:505px;height:1px;background:#D2D9E8;"></div>
<div class="a" style="left:288px;top:429px;width:505px;height:1px;background:#D2D9E8;"></div>
<div class="a" style="left:288px;top:444px;width:505px;height:1px;background:#D2D9E8;"></div>
<div class="a" style="left:288px;top:459px;width:505px;height:1px;background:#D2D9E8;"></div>
<div class="a" style="left:288px;top:474px;width:505px;height:1px;background:#D2D9E8;"></div>
<div class="a" style="left:288px;top:489px;width:505px;height:1px;background:#D2D9E8;"></div>
<div class="a" style="left:288px;top:504px;width:505px;height:1px;background:#D2D9E8;"></div>
<div class="a" style="left:288px;top:519px;width:505px;height:1px;background:#D2D9E8;"></div>
<div class="a" style="left:402px;top:333px;width:1px;height:202px;background:#D2D9E8;"></div>
<div class="a" style="left:517px;top:333px;width:1px;height:202px;background:#D2D9E8;"></div>
<div class="a" style="left:632px;top:333px;width:1px;height:202px;background:#D2D9E8;"></div>
<div class="a" style="left:747px;top:333px;width:1px;height:202px;background:#D2D9E8;"></div>
<div class="a" style="left:747px;top:333px;width:1px;height:66px;background:#A0A0A0;"></div>
<div class="a" style="left:730px;top:340px;width:17px;height:15px;background:#E1E1E1;border:1px solid #C8C8C8"></div>
<svg class="a" style="left:733px;top:345px;" width="11" height="6" viewBox="0 0 11 6"><path d="M1 1l4.5 4 4.5-4" fill="none" stroke="#444" stroke-width="1.2"/></svg>
<div class="a" style="left:684px;top:386px;width:13px;height:13px;background:#fff;border:1.3px solid #333"></div>
<div class="a" style="left:288px;top:535px;width:505px;height:16px;background:#F1F1F1;"></div>
<div class="a" style="left:290px;top:535px;width:16px;height:16px;background:#fff;border:1px solid #A0A0A0"></div>
<svg class="a" style="left:295px;top:539px;" width="5" height="8" viewBox="0 0 5 8"><path d="M5 0v8l-4.5-4z" fill="#6E6E6E"/></svg>
<div class="a" style="left:456px;top:535px;width:17px;height:16px;background:#fff;border:1px solid #A0A0A0"></div>
<div class="a" style="left:776px;top:535px;width:15px;height:16px;background:#fff;border:1px solid #A0A0A0"></div>
<svg class="a" style="left:781px;top:539px;" width="5" height="8" viewBox="0 0 5 8"><path d="M0 0v8l4.5-4z" fill="#6E6E6E"/></svg>
<div class="a" style="left:1px;top:577px;width:798px;height:22px;background:#F1F1F1;border-top:1px solid #C6C6C6"></div>
<div class="t" style="left:8.20px;top:582px;font-size:12px;line-height:12px;color:#444444;font-weight:normal;font-family:'Liberation Sans',sans-serif;transform:scaleX(0.9329);transform-origin:0 0;">Form View</div>
<div class="t" style="left:604.40px;top:582px;font-size:12px;line-height:12px;color:#444444;font-weight:normal;font-family:'Liberation Sans',sans-serif;transform:scaleX(0.8979);transform-origin:0 0;">Num Lock</div>
<svg class="a" style="left:685px;top:581px;shape-rendering:crispEdges" width="14" height="13" viewBox="0 0 14 13"><rect x="0.5" y="0.5" width="13" height="12" fill="none" stroke="#555"/><path d="M0.5 3.5h13M4.5 3.5v9M7 6.5h2M10 6.5h2M7 9.5h2M10 9.5h2" stroke="#555" stroke-width="1"/></svg>
<div class="t" style="left:722.50px;top:583px;font-size:10px;line-height:10px;color:#444444;font-weight:normal;font-family:'Liberation Sans',sans-serif;transform:scaleX(0.7091);transform-origin:0 0;">SQL</div>
<div class="a" style="left:749px;top:578px;width:38px;height:21px;background:#C8C8C8;"></div>
<svg class="a" style="left:760px;top:580px;" width="16" height="15" viewBox="0 0 16 15"><path d="M1.8 1.2V8.3H5.6M1.8 1.2L6.2 6.3M1.8 5.2h1.6" fill="none" stroke="#5A5A5A" stroke-width="1.3"/><path d="M7.2 8.4L13.6 2" stroke="#5A5A5A" stroke-width="2.6"/><path d="M6.3 9.3l0.6-1.8 1.2 1.2z" fill="#5A5A5A"/><rect x="2.8" y="10.6" width="12.2" height="3" fill="none" stroke="#5A5A5A" stroke-width="1.2"/><path d="M5.6 10.6v1.3M8.6 10.6v1.3M11.6 10.6v1.3" stroke="#5A5A5A"/></svg>
<div class="a" style="left:0px;top:0px;width:800px;height:600px;background:transparent;border:1px solid #A4373A;border-top:none"></div>
<div class="a" style="left:160px;top:98px;width:478px;height:407px;background:#F0F0F0;border:1px solid #1883D7;box-shadow:0 0 5px 1px rgba(0,0,0,.25)"></div>
<div class="a" style="left:161px;top:99px;width:476px;height:30px;background:#fff;"></div>
<div class="t" style="left:169.40px;top:108px;font-size:12px;line-height:12px;color:#000;font-weight:normal;font-family:'Liberation Sans',sans-serif;transform:scaleX(0.9430);transform-origin:0 0;">Expression Builder</div>
<svg class="a" style="left:615px;top:107px;" width="13" height="13" viewBox="0 0 13 13"><path d="M1 1L12 12M12 1L1 12" stroke="#111" stroke-width="1.1"/></svg>
<div class="t" style="left:169.00px;top:134px;font-size:11px;line-height:11px;color:#000;font-weight:normal;font-family:'Liberation Sans',sans-serif;transform:scaleX(0.9851);transform-origin:0 0;">Enter an <u>E</u>xpression to define the <span style="color:#0066CC;text-decoration:underline">calculated query field</span>:</div>
<div class="t" style="left:169.00px;top:151px;font-size:11px;line-height:11px;color:#000;font-weight:normal;font-family:'Liberation Sans',sans-serif;transform:scaleX(1.0050);transform-origin:0 0;">(Examples of expressions include [field1] + [field2] and [field1] &lt; 5)</div>
<div class="a" style="left:169px;top:168px;width:398px;height:93px;background:#fff;border:1px solid #A0A0A0"></div>
<div class="t" style="left:172.50px;top:173px;font-size:11px;line-height:11px;color:#000;font-weight:normal;font-family:'Liberation Sans',sans-serif;transform:scaleX(0.9336);transform-origin:0 0;">[Normal Price]</div>
<div class="a" style="left:575px;top:169px;width:54px;height:18px;background:#E1E1E1;border:2px solid #0078D7"></div>
<div class="t" style="left:594.50px;top:173px;font-size:11px;line-height:11px;color:#000;font-weight:normal;font-family:'Liberation Sans',sans-serif;transform:scaleX(0.8758);transform-origin:0 0;">OK</div>
<div class="a" style="left:575px;top:193px;width:54px;height:18px;background:#E1E1E1;border:1px solid #ADADAD"></div>
<div class="t" style="left:585.00px;top:197px;font-size:11px;line-height:11px;color:#000;font-weight:normal;font-family:'Liberation Sans',sans-serif;transform:scaleX(0.9468);transform-origin:0 0;">Cancel</div>
<div class="a" style="left:575px;top:218px;width:54px;height:18px;background:#E1E1E1;border:1px solid #ADADAD"></div>
<div class="t" style="left:590.00px;top:222px;font-size:11px;line-height:11px;color:#000;font-weight:normal;font-family:'Liberation Sans',sans-serif;transform:scaleX(0.9331);transform-origin:0 0;">Help</div>
<div class="a" style="left:575px;top:242px;width:54px;height:18px;background:#E1E1E1;border:1px solid #ADADAD"></div>
<div class="t" style="left:583.00px;top:246px;font-size:11px;line-height:11px;color:#000;font-weight:normal;font-family:'Liberation Sans',sans-serif;transform:scaleX(0.9586);transform-origin:0 0;">&lt;&lt; Less</div>
<div class="t" style="left:168.60px;top:273px;font-size:11px;line-height:11px;color:#000;font-weight:normal;font-family:'Liberation Sans',sans-serif;transform:scaleX(0.9381);transform-origin:0 0;">Expression Elements</div>
<div class="t" style="left:345.70px;top:273px;font-size:11px;line-height:11px;color:#000;font-weight:normal;font-family:'Liberation Sans',sans-serif;transform:scaleX(0.9598);transform-origin:0 0;">Expression Categories</div>
<div class="t" style="left:489.50px;top:274px;font-size:11px;line-height:11px;color:#000;font-weight:normal;font-family:'Liberation Sans',sans-serif;transform:scaleX(0.9396);transform-origin:0 0;">Expression Values</div>
<div class="a" style="left:169px;top:288px;width:173px;height:148px;background:#fff;border:1px solid #828790"></div>
<div class="a" style="left:346px;top:288px;width:140px;height:148px;background:#fff;border:1px solid #828790"></div>
<div class="a" style="left:490px;top:288px;width:140px;height:148px;background:#fff;border:1px solid #828790"></div>
<div class="a" style="left:212px;top:290px;width:45px;height:16px;background:#EBEBEB;"></div>
<div class="t" style="left:213.70px;top:293px;font-size:11px;line-height:11px;color:#000;font-weight:normal;font-family:'Liberation Sans',sans-serif;transform:scaleX(0.9377);transform-origin:0 0;">qrySales</div>
<div class="t" style="left:213.70px;top:309px;font-size:11px;line-height:11px;color:#000;font-weight:normal;font-family:'Liberation Sans',sans-serif;transform:scaleX(0.9442);transform-origin:0 0;">Functions</div>
<div class="t" style="left:213.70px;top:325px;font-size:11px;line-height:11px;color:#000;font-weight:normal;font-family:'Liberation Sans',sans-serif;">Query.accdb</div>
<div class="t" style="left:213.70px;top:341px;font-size:11px;line-height:11px;color:#000;font-weight:normal;font-family:'Liberation Sans',sans-serif;transform:scaleX(0.9695);transform-origin:0 0;">Constants</div>
<div class="t" style="left:213.70px;top:357px;font-size:11px;line-height:11px;color:#000;font-weight:normal;font-family:'Liberation Sans',sans-serif;transform:scaleX(0.9816);transform-origin:0 0;">Operators</div>
<div class="t" style="left:213.70px;top:373px;font-size:11px;line-height:11px;color:#000;font-weight:normal;font-family:'Liberation Sans',sans-serif;transform:scaleX(0.9307);transform-origin:0 0;">Common Expressions</div>
<svg class="a" style="left:174px;top:288px;shape-rendering:crispEdges" width="20" height="100" viewBox="0 0 20 100"><g fill="#7A7A7A"><rect x="8" y="10" width="1" height="1"/><rect x="8" y="12" width="1" height="1"/><rect x="8" y="14" width="1" height="1"/><rect x="8" y="16" width="1" height="1"/><rect x="8" y="18" width="1" height="1"/><rect x="8" y="20" width="1" height="1"/><rect x="8" y="22" width="1" height="1"/><rect x="8" y="24" width="1" height="1"/><rect x="8" y="26" width="1" height="1"/><rect x="8" y="28" width="1" height="1"/><rect x="8" y="30" width="1" height="1"/><rect x="8" y="32" width="1" height="1"/><rect x="8" y="34" width="1" height="1"/><rect x="8" y="36" width="1" height="1"/><rect x="8" y="38" width="1" height="1"/><rect x="8" y="40" width="1" height="1"/><rect x="8" y="42" width="1" height="1"/><rect x="8" y="44" width="1" height="1"/><rect x="8" y="46" width="1" height="1"/><rect x="8" y="48" width="1" height="1"/><rect x="8" y="50" width="1" height="1"/><rect x="8" y="52" width="1" height="1"/><rect x="8" y="54" width="1" height="1"/><rect x="8" y="56" width="1" height="1"/><rect x="8" y="58" width="1" height="1"/><rect x="8" y="60" width="1" height="1"/><rect x="8" y="62" width="1" height="1"/><rect x="8" y="64" width="1" height="1"/><rect x="8" y="66" width="1" height="1"/><rect x="8" y="68" width="1" height="1"/><rect x="8" y="70" width="1" height="1"/><rect x="8" y="72" width="1" height="1"/><rect x="8" y="74" width="1" height="1"/><rect x="8" y="76" width="1" height="1"/><rect x="8" y="78" width="1" height="1"/><rect x="8" y="80" width="1" height="1"/><rect x="8" y="82" width="1" height="1"/><rect x="8" y="84" width="1" height="1"/><rect x="8" y="86" width="1" height="1"/><rect x="8" y="88" width="1" height="1"/><rect x="8" y="90" width="1" height="1"/><rect x="8" y="10" width="1" height="1"/><rect x="10" y="10" width="1" height="1"/><rect x="12" y="10" width="1" height="1"/><rect x="14" y="10" width="1" height="1"/><rect x="16" y="10" width="1" height="1"/><rect x="18" y="10" width="1" height="1"/><rect x="14" y="26" width="1" height="1"/><rect x="16" y="26" width="1" height="1"/><rect x="18" y="26" width="1" height="1"/><rect x="14" y="42" width="1" height="1"/><rect x="16" y="42" width="1" height="1"/><rect x="18" y="42" width="1" height="1"/><rect x="8" y="58" width="1" height="1"/><rect x="10" y="58" width="1" height="1"/><rect x="12" y="58" width="1" height="1"/><rect x="14" y="58" width="1" height="1"/><rect x="16" y="58" width="1" height="1"/><rect x="18" y="58" width="1" height="1"/><rect x="8" y="74" width="1" height="1"/><rect x="10" y="74" width="1" height="1"/><rect x="12" y="74" width="1" height="1"/><rect x="14" y="74" width="1" height="1"/><rect x="16" y="74" width="1" height="1"/><rect x="18" y="74" width="1" height="1"/><rect x="8" y="90" width="1" height="1"/><rect x="10" y="90" width="1" height="1"/><rect x="12" y="90" width="1" height="1"/><rect x="14" y="90" width="1" height="1"/><rect x="16" y="90" width="1" height="1"/><rect x="18" y="90" width="1" height="1"/></g></svg>
<svg class="a" style="left:178px;top:310px;shape-rendering:crispEdges" width="9" height="9" viewBox="0 0 9 9"><rect x="0.5" y="0.5" width="8" height="8" fill="#F4F4F4" stroke="#8C8C8C"/><path d="M2 4.5h5M4.5 2v5" stroke="#1E3F8C" stroke-width="1"/></svg>
<svg class="a" style="left:178px;top:326px;shape-rendering:crispEdges" width="9" height="9" viewBox="0 0 9 9"><rect x="0.5" y="0.5" width="8" height="8" fill="#F4F4F4" stroke="#8C8C8C"/><path d="M2 4.5h5M4.5 2v5" stroke="#1E3F8C" stroke-width="1"/></svg>
<svg class="a" style="left:193px;top:290px;shape-rendering:crispEdges" width="17" height="15" viewBox="0 0 17 15"><rect x="5" y="0" width="11" height="11" fill="#fff"/><rect x="5" y="0" width="11" height="3" fill="#3F8C8E"/><rect x="5" y="0" width="1" height="11" fill="#9AAFC0"/><rect x="15" y="0" width="1" height="11" fill="#2E4560"/><rect x="5" y="10" width="11" height="1" fill="#2E4560"/><rect x="11" y="4" width="3" height="1" fill="#7F93AE"/><rect x="11" y="6" width="3" height="1" fill="#7F93AE"/><rect x="11" y="8" width="3" height="1" fill="#7F93AE"/><rect x="0" y="4" width="11" height="11" fill="#fff"/><rect x="0" y="4" width="11" height="3" fill="#3F8C8E"/><rect x="0" y="4" width="1" height="11" fill="#9AAFC0"/><rect x="10" y="4" width="1" height="11" fill="#2E4560"/><rect x="0" y="14" width="11" height="1" fill="#2E4560"/><rect x="2" y="8" width="3" height="1" fill="#7F93AE"/><rect x="6" y="8" width="3" height="1" fill="#7F93AE"/><rect x="2" y="10" width="3" height="1" fill="#7F93AE"/><rect x="2" y="12" width="3" height="1" fill="#7F93AE"/><rect x="6" y="12" width="3" height="1" fill="#7F93AE"/></svg>
<svg class="a" style="left:193px;top:306px;" width="16" height="16" viewBox="0 0 16 16"><circle cx="8" cy="7.7" r="6.9" fill="#F6F6F6" stroke="#444" stroke-width="1"/><text x="2.6" y="11.6" font-family="Liberation Serif" font-style="italic" font-weight="bold" font-size="11" fill="#000">f</text><text x="7.6" y="12.2" font-family="Liberation Serif" font-style="italic" font-weight="bold" font-size="8" fill="#000">x</text></svg>
<svg class="a" style="left:193px;top:322px;" width="17" height="16" viewBox="0 0 17 16"><rect x="5" y="0.5" width="11" height="14" fill="#C9DDF0" stroke="#4A7EAA"/><rect x="5.5" y="0.5" width="10" height="2" fill="#F0A030"/><rect x="1" y="2" width="9" height="9" fill="#fff" stroke="#A0205A" stroke-width="1.4"/><text x="5.5" y="9.8" font-family="Liberation Sans" font-weight="bold" font-size="8" fill="#A0205A" text-anchor="middle">A</text><rect x="4" y="13" width="12" height="2.5" fill="#4A6E9A"/></svg>
<svg class="a" style="left:193px;top:338px;shape-rendering:crispEdges" width="15" height="16" viewBox="0 0 15 16"><rect x="1.5" y="0.5" width="7" height="9" fill="#fff" stroke="#000"/><path d="M3.3 5h3.4M5 3.3v3.4" stroke="#000"/><path d="M8 0.5V6M1.5 9.5H6" stroke="#000" stroke-width="1.6"/><rect x="6.5" y="6" width="7" height="9" fill="#fff" stroke="#000"/><path d="M13.5 6v9.5H6.5" fill="none" stroke="#000" stroke-width="1.8"/><path d="M8.5 10.5h3" stroke="#000"/></svg>
<svg class="a" style="left:193px;top:354px;shape-rendering:crispEdges" width="15" height="16" viewBox="0 0 15 16"><rect x="1.5" y="0.5" width="7" height="9" fill="#fff" stroke="#000"/><path d="M3.3 5h3.4M5 3.3v3.4" stroke="#000"/><path d="M8 0.5V6M1.5 9.5H6" stroke="#000" stroke-width="1.6"/><rect x="6.5" y="6" width="7" height="9" fill="#fff" stroke="#000"/><path d="M13.5 6v9.5H6.5" fill="none" stroke="#000" stroke-width="1.8"/><path d="M8.5 10.5h3" stroke="#000"/></svg>
<svg class="a" style="left:190px;top:368px;" width="20" height="20" viewBox="0 0 20 20"><path d="M3 6.5L7.5 2.2L14 4.2L9.5 7.5z" fill="#F4F4F4" stroke="#2E6EA8" stroke-width="0.9"/><path d="M9.5 7.5L14 4.2V15L9.5 18z" fill="#7FB4DC" stroke="#2E6EA8" stroke-width="0.9"/><path d="M3 6.5L9.5 7.5V18L3 17z" fill="#A8D4EE" stroke="#2E6EA8" stroke-width="1.1"/><path d="M5 7v10" stroke="#5A9AC8" stroke-width="0.8"/><polygon points="12.50,5.20 13.85,8.34 17.26,8.65 14.69,10.91 15.44,14.25 12.50,12.50 9.56,14.25 10.31,10.91 7.74,8.65 11.15,8.34" fill="#FFCF1A" stroke="#E0880E" stroke-width="1"/></svg>
<div class="a" style="left:348px;top:329px;width:136px;height:13px;background:#3399FF;"></div>
<div class="t" style="left:350.70px;top:292px;font-size:11px;line-height:11px;color:#000;font-weight:normal;font-family:'Liberation Sans',sans-serif;">&lt;Parameters&gt;</div>
<div class="t" style="left:349.80px;top:305px;font-size:11px;line-height:11px;color:#000;font-weight:normal;font-family:'Liberation Sans',sans-serif;transform:scaleX(0.9482);transform-origin:0 0;">TourName</div>
<div class="t" style="left:349.80px;top:317px;font-size:11px;line-height:11px;color:#000;font-weight:normal;font-family:'Liberation Sans',sans-serif;transform:scaleX(0.985);transform-origin:0 0;">Number of Tickets</div>
<div class="t" style="left:349.80px;top:330px;font-size:11px;line-height:11px;color:#fff;font-weight:normal;font-family:'Liberation Sans',sans-serif;transform:scaleX(0.9173);transform-origin:0 0;">Normal Price</div>
<div class="t" style="left:349.80px;top:343px;font-size:11px;line-height:11px;color:#000;font-weight:normal;font-family:'Liberation Sans',sans-serif;transform:scaleX(0.9244);transform-origin:0 0;">First Class Price</div>
<div class="a" style="left:492px;top:290px;width:136px;height:13px;background:#3399FF;"></div>
<div class="t" style="left:494.50px;top:291px;font-size:11px;line-height:11px;color:#fff;font-weight:normal;font-family:'Liberation Sans',sans-serif;transform:scaleX(1.0443);transform-origin:0 0;">&lt;Value&gt;</div>
<svg class="a" style="left:626px;top:495px;shape-rendering:crispEdges" width="8" height="8" viewBox="0 0 8 8"><rect x="6" y="0" width="2" height="2" fill="#A0A0A0"/><rect x="3" y="3" width="2" height="2" fill="#A0A0A0"/><rect x="6" y="3" width="2" height="2" fill="#A0A0A0"/><rect x="0" y="6" width="2" height="2" fill="#A0A0A0"/><rect x="3" y="6" width="2" height="2" fill="#A0A0A0"/><rect x="6" y="6" width="2" height="2" fill="#A0A0A0"/></svg>
<svg class="a" style="left:408px;top:312px;" width="64" height="50" viewBox="0 0 64 50"><defs><filter id="sh" x="-20%" y="-20%" width="150%" height="150%"><feDropShadow dx="1" dy="1.5" stdDeviation="1.2" flood-color="#000" flood-opacity="0.35"/></filter></defs><g filter="url(#sh)"><circle cx="38.5" cy="24" r="18.5" fill="#E88A3A"/><path d="M6 24L24 13.5L24 34.5z" fill="#E88A3A"/></g></svg>
<div class="t" style="left:441.00px;top:325px;font-size:23px;line-height:23px;color:#fff;font-weight:bold;font-family:'Liberation Sans',sans-serif;transform:scaleX(1.0083);transform-origin:0 0;">3</div>
</body></html>
